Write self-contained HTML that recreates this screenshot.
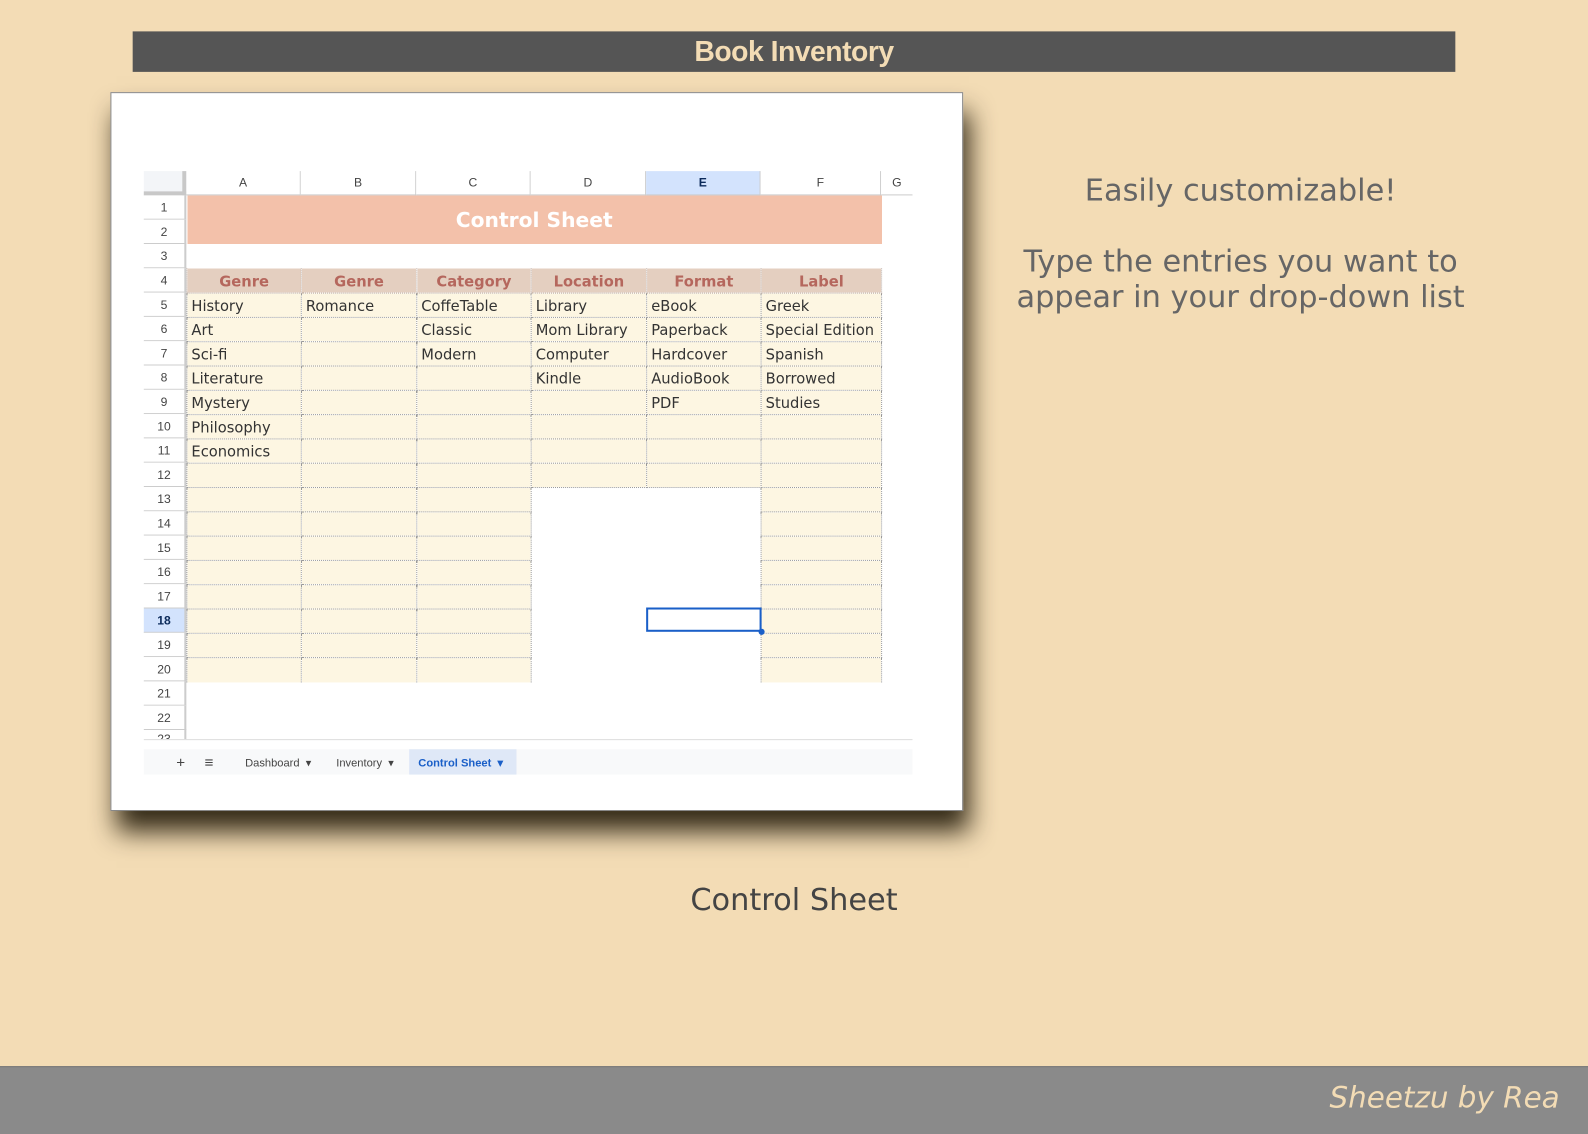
<!DOCTYPE html>
<html><head><meta charset="utf-8"><style>
*{margin:0;padding:0;box-sizing:border-box}
html,body{width:1588px;height:1134px;overflow:hidden;background:#f3dcb5}
#w{position:absolute;left:0;top:0;width:1568px;height:1120px;transform:scale(1.01276,1.0125);transform-origin:0 0;font-family:"Liberation Sans",sans-serif}
.a{position:absolute}
#title{left:131px;top:31px;width:1306px;height:40px;background:#555;color:#f3dcb5;font-weight:bold;font-size:28px;text-align:center;line-height:40px;letter-spacing:-0.5px}
#card{left:109px;top:91px;width:842px;height:710px;background:#fff;border:1px solid #888;box-shadow:6px 20px 24px rgba(30,22,5,.9)}
table{position:absolute;left:184px;top:193px;border-collapse:collapse;table-layout:fixed;font-family:"DejaVu Sans",sans-serif}
td{height:24px;padding:3px 0 0 4px;font-size:14.5px;color:#333;white-space:nowrap;overflow:hidden;border:1px dotted #999;line-height:20px}
td.c{background:#fdf6e2}
td.n{border:none;background:#fff}
td.h{background:#e4cfc0;color:#b5675d;font-weight:bold;text-align:center;padding:4px 0 0 0;border:1px dotted #b9a9a0;border-top:none}
.rh{left:142px;width:42px;height:24px;border-bottom:1px solid #ccc;border-right:2px solid #ccc;font-size:12px;color:#444;text-align:center;line-height:24px;background:#fff;font-family:"Liberation Sans",sans-serif}
.ch{top:169px;height:24px;border-right:1px solid #ccc;border-bottom:1px solid #ccc;font-size:12px;color:#444;text-align:center;line-height:22px;background:#fff}
.rt{color:#666;font-size:30px;text-align:center;font-family:"DejaVu Sans",sans-serif;width:600px;left:925px}
</style></head><body><div id="w">
<div class="a" id="title">Book Inventory</div>
<div class="a" id="card"></div>
<div class="a" style="left:142px;top:169px;width:42px;height:24px;background:#f3f5f8;border-right:4px solid #c8c8c8;border-bottom:4px solid #c8c8c8"></div>
<div class="a ch" style="left:184px;width:113px">A</div>
<div class="a ch" style="left:297px;width:114px">B</div>
<div class="a ch" style="left:411px;width:113px">C</div>
<div class="a ch" style="left:524px;width:114px">D</div>
<div class="a ch" style="left:638px;width:113px;background:#d3e3fd;color:#0b2a5a;font-weight:bold">E</div>
<div class="a ch" style="left:751px;width:119px">F</div>
<div class="a ch" style="left:870px;width:31px;border-right:none">G</div>
<div class="a rh" style="top:193px">1</div><div class="a rh" style="top:217px">2</div><div class="a rh" style="top:241px">3</div><div class="a rh" style="top:265px">4</div><div class="a rh" style="top:289px">5</div><div class="a rh" style="top:313px">6</div><div class="a rh" style="top:337px">7</div><div class="a rh" style="top:361px">8</div><div class="a rh" style="top:385px">9</div><div class="a rh" style="top:409px">10</div><div class="a rh" style="top:433px">11</div><div class="a rh" style="top:457px">12</div><div class="a rh" style="top:481px">13</div><div class="a rh" style="top:505px">14</div><div class="a rh" style="top:529px">15</div><div class="a rh" style="top:553px">16</div><div class="a rh" style="top:577px">17</div><div class="a rh" style="top:601px;background:#d3e3fd;color:#0b2a5a;font-weight:bold">18</div><div class="a rh" style="top:625px">19</div><div class="a rh" style="top:649px">20</div><div class="a rh" style="top:673px">21</div><div class="a rh" style="top:697px">22</div><div class="a rh" style="top:721px;height:9px;line-height:18px;overflow:hidden;border-bottom:none">23</div>
<table>
<colgroup><col style="width:113px"><col style="width:114px"><col style="width:113px"><col style="width:114px"><col style="width:113px"><col style="width:119px"></colgroup>
<tr><td colspan="6" rowspan="2" style="background:#f3c1aa;color:#fff;font-weight:bold;font-size:20px;text-align:center;border:none;height:48px;padding:0;line-height:48px">Control Sheet</td></tr>
<tr></tr>
<tr><td class="n" colspan="6"></td></tr>
<tr><td class="h">Genre</td><td class="h">Genre</td><td class="h">Category</td><td class="h">Location</td><td class="h">Format</td><td class="h">Label</td></tr>
<tr><td class="c">History</td><td class="c">Romance</td><td class="c">CoffeTable</td><td class="c">Library</td><td class="c">eBook</td><td class="c">Greek</td></tr>
<tr><td class="c">Art</td><td class="c"></td><td class="c">Classic</td><td class="c">Mom Library</td><td class="c">Paperback</td><td class="c">Special Edition</td></tr>
<tr><td class="c">Sci-fi</td><td class="c"></td><td class="c">Modern</td><td class="c">Computer</td><td class="c">Hardcover</td><td class="c">Spanish</td></tr>
<tr><td class="c">Literature</td><td class="c"></td><td class="c"></td><td class="c">Kindle</td><td class="c">AudioBook</td><td class="c">Borrowed</td></tr>
<tr><td class="c">Mystery</td><td class="c"></td><td class="c"></td><td class="c"></td><td class="c">PDF</td><td class="c">Studies</td></tr>
<tr><td class="c">Philosophy</td><td class="c"></td><td class="c"></td><td class="c"></td><td class="c"></td><td class="c"></td></tr>
<tr><td class="c">Economics</td><td class="c"></td><td class="c"></td><td class="c"></td><td class="c"></td><td class="c"></td></tr>
<tr><td class="c"></td><td class="c"></td><td class="c"></td><td class="c"></td><td class="c"></td><td class="c"></td></tr>
<tr><td class="c"></td><td class="c"></td><td class="c"></td><td class="n"></td><td class="n"></td><td class="c"></td></tr>
<tr><td class="c"></td><td class="c"></td><td class="c"></td><td class="n"></td><td class="n"></td><td class="c"></td></tr>
<tr><td class="c"></td><td class="c"></td><td class="c"></td><td class="n"></td><td class="n"></td><td class="c"></td></tr>
<tr><td class="c"></td><td class="c"></td><td class="c"></td><td class="n"></td><td class="n"></td><td class="c"></td></tr>
<tr><td class="c"></td><td class="c"></td><td class="c"></td><td class="n"></td><td class="n"></td><td class="c"></td></tr>
<tr><td class="c"></td><td class="c"></td><td class="c"></td><td class="n"></td><td class="n"></td><td class="c"></td></tr>
<tr><td class="c"></td><td class="c"></td><td class="c"></td><td class="n"></td><td class="n"></td><td class="c"></td></tr>
<tr><td class="c" style="border-bottom:none"></td><td class="c" style="border-bottom:none"></td><td class="c" style="border-bottom:none"></td><td class="n"></td><td class="n"></td><td class="c" style="border-bottom:none"></td></tr>
</table>
<div class="a" style="left:638px;top:600px;width:114px;height:24px;border:2px solid #1a5fc8"></div>
<div class="a" style="left:749px;top:621px;width:6px;height:6px;border-radius:3px;background:#1a5fc8"></div>
<div class="a" style="left:142px;top:730px;width:759px;height:1px;background:#ddd"></div>
<div class="a" style="left:142px;top:740px;width:759px;height:25px;background:#f8f9fa;font-size:11px;color:#444;line-height:28px">
 <span class="a" style="left:32px;font-size:15px;line-height:27px">+</span>
 <span class="a" style="left:60px;font-size:15px;line-height:27px">≡</span>
 <span class="a" style="left:100px">Dashboard &nbsp;▾</span>
 <span class="a" style="left:190px">Inventory &nbsp;▾</span>
 <span class="a" style="left:262px;width:106px;height:25px;background:#dfe8f7;color:#1a5fc8;font-weight:bold;padding-left:9px">Control Sheet &nbsp;▾</span>
</div>
<div class="a rt" style="top:171px">Easily customizable!</div>
<div class="a rt" style="top:241px;line-height:35px">Type the entries you want to<br>appear in your drop-down list</div>
<div class="a" style="left:484px;width:600px;top:872px;text-align:center;font-size:30px;color:#444;font-family:'DejaVu Sans',sans-serif">Control Sheet</div>
<div class="a" style="left:0;top:1053px;width:1568px;height:67px;background:#8a8a8a;border-top:1px solid #777"></div>
<div class="a" style="right:28px;top:1067px;font-family:'DejaVu Sans',sans-serif;font-style:italic;font-size:29px;color:#f3dcb5">Sheetzu by Rea</div>
</div></body></html>
